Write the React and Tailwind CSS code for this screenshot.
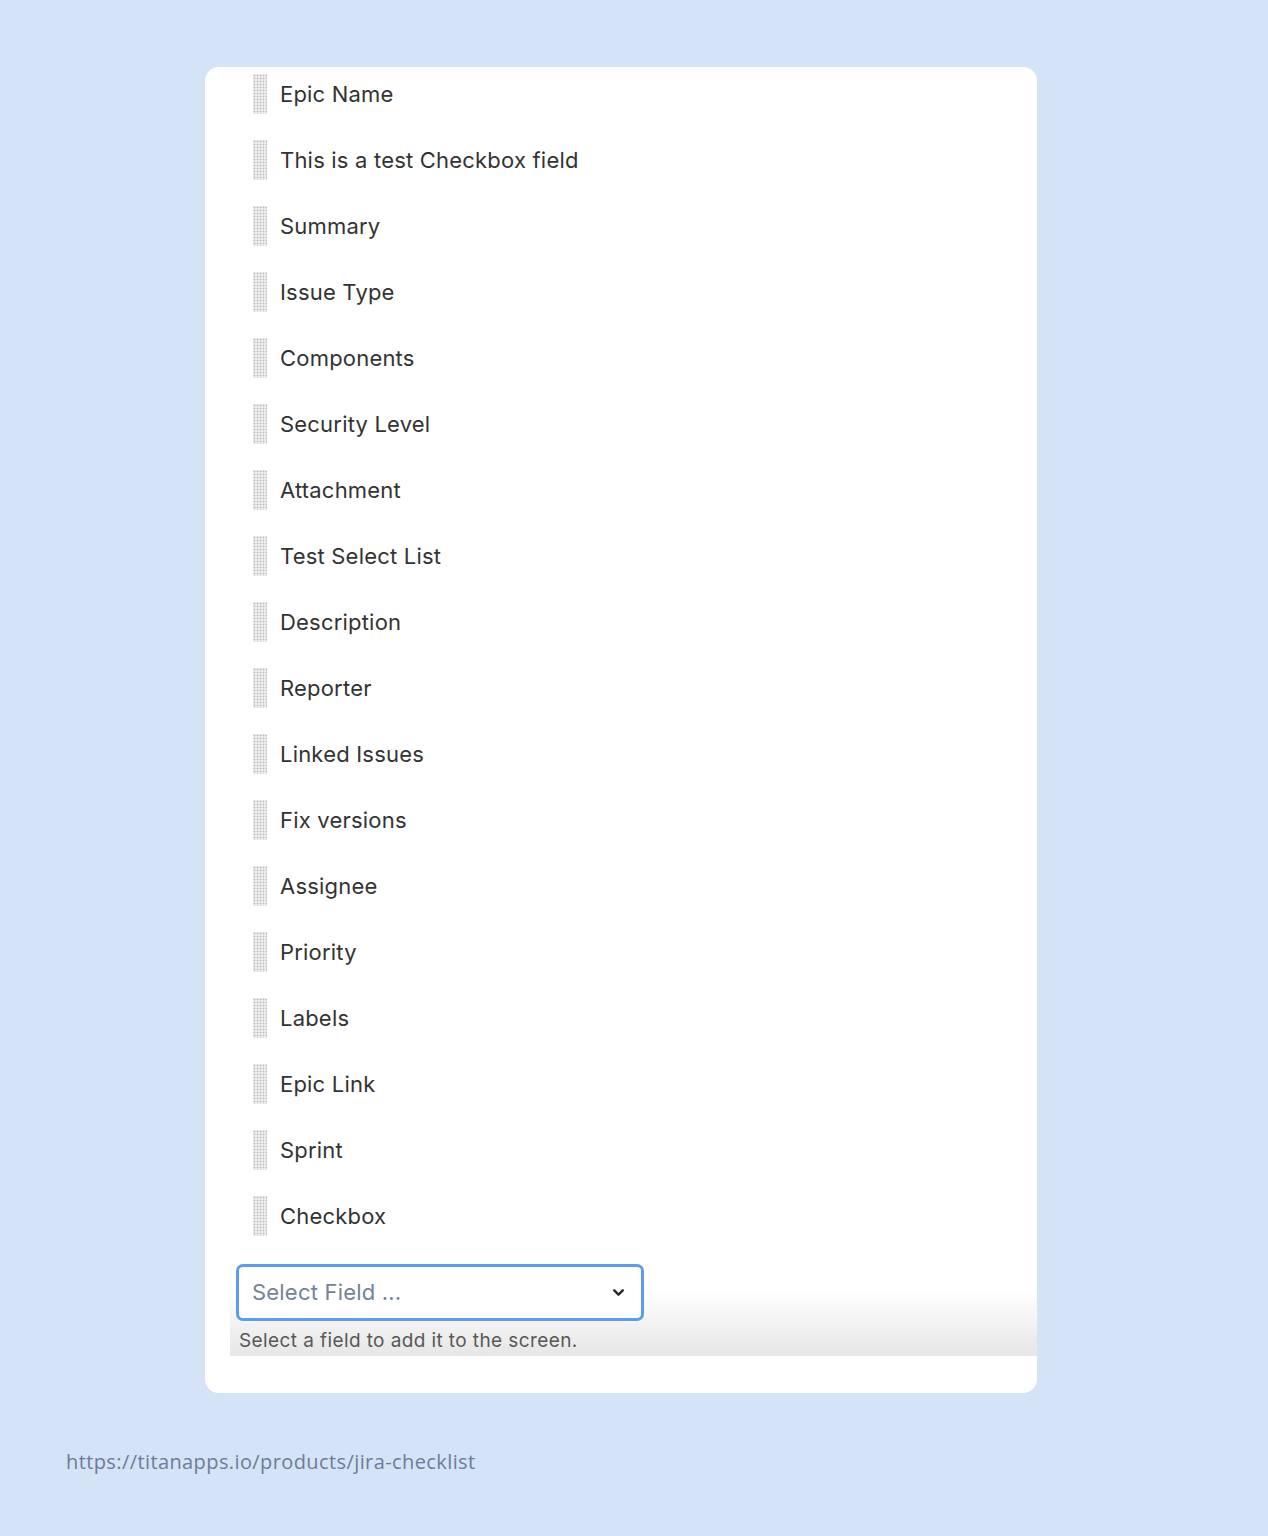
import React from 'react';
import { ChevronDown } from 'lucide-react';

const fields = [
  'Epic Name',
  'This is a test Checkbox field',
  'Summary',
  'Issue Type',
  'Components',
  'Security Level',
  'Attachment',
  'Test Select List',
  'Description',
  'Reporter',
  'Linked Issues',
  'Fix versions',
  'Assignee',
  'Priority',
  'Labels',
  'Epic Link',
  'Sprint',
  'Checkbox',
];

const DragHandle = () => (
  <svg width="14" height="40" viewBox="0 0 14 40" className="shrink-0">
    <defs>
      <pattern id="dots" width="3" height="3" patternUnits="userSpaceOnUse">
        <rect x="0.5" y="0.5" width="2" height="2" fill="#bcbcbc" />
      </pattern>
    </defs>
    <rect width="14" height="40" fill="url(#dots)" />
  </svg>
);

export default function App() {
  return (
    <div className="min-h-[1536px] w-full bg-[#d5e3f7] pt-[67px] font-['Inter',sans-serif]">
      <div className="ml-[205px] w-[832px] h-[1326px] rounded-[14px] bg-white pl-[25px] overflow-hidden">
        <div className="flex flex-col pt-[7px]">
          <div className="flex flex-col gap-[26px] pl-[23px]">
            {fields.map((f) => (
              <div key={f} className="flex items-center h-[40px] gap-[13px]">
                <DragHandle />
                <span className="text-[22px] text-[#333333] leading-none tracking-[0.2px]">{f}</span>
              </div>
            ))}
          </div>
          <div className="mt-[28px] h-[92px] bg-gradient-to-b from-white via-white via-[30%] to-[#e6e6e6] pl-[6px]">
            <div className="w-[408px] h-[57px] rounded-[7px] border-[3px] border-[#5a9bf6] bg-white flex items-center justify-between pl-[13px] pr-[14px]">
              <span className="text-[22px] text-[#74829a] tracking-[0.2px]">Select Field ...</span>
              <ChevronDown size={17} strokeWidth={3.5} color="#2b2b2b" />
            </div>
            <div className="pl-[3px] pt-[10px] text-[19px] leading-none text-[#585858] tracking-[0.4px]">
              Select a field to add it to the screen.
            </div>
          </div>
        </div>
      </div>
      <div className="pl-[66px] pt-[54px] text-[20px] text-[#6d7b9a] font-['Open_Sans',sans-serif] tracking-[0.4px]">
        https://titanapps.io/products/jira-checklist
      </div>
    </div>
  );
}
